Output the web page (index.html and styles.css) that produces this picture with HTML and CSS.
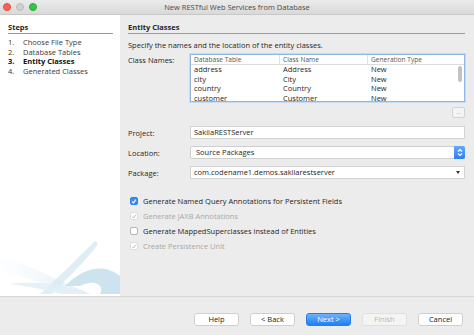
FILE: index.html
```html
<!DOCTYPE html>
<html>
<head>
<meta charset="utf-8">
<link rel="stylesheet" href="styles.css">
</head>
<body>
<div class="window">
  <div class="titlebar">
    <div class="lights">
      <span class="light red"></span>
      <span class="light gray"></span>
      <span class="light green"></span>
    </div>
    <div class="title">New RESTful Web Services from Database</div>
  </div>
  <div class="main">
    <div class="steps">
      <div class="steps-head">Steps</div>
      <ol class="step-list">
        <li><span class="num">1.</span>Choose File Type</li>
        <li><span class="num">2.</span>Database Tables</li>
        <li class="current"><span class="num">3.</span>Entity Classes</li>
        <li><span class="num">4.</span>Generated Classes</li>
      </ol>
      <svg class="swoosh" width="120" height="60" viewBox="0 0 120 60">
        <defs>
          <linearGradient id="g1" x1="0" y1="0" x2="1" y2="0">
            <stop offset="0" stop-color="#eef5fa" stop-opacity="0.2"/>
            <stop offset="1" stop-color="#c6def0"/>
          </linearGradient>
        </defs>
        <path d="M0 20 C30 30 60 45 90 58 L70 58 C45 48 20 40 0 34 Z" fill="url(#g1)" opacity="0.6"/>
        <path d="M95 5 C80 20 60 40 40 58 L52 58 C70 40 88 22 98 8 Z" fill="#d7e8f2" opacity="0.8"/>
        <path d="M65 50 C85 30 105 28 120 40 L120 58 L100 58 C105 50 95 42 80 50 Z" fill="#c2dcec" opacity="0.8"/>
        <path d="M10 48 C40 44 70 50 90 58 L60 58 C40 52 25 50 10 48 Z" fill="#e2eef6" opacity="0.9"/>
      </svg>
    </div>
    <div class="content">
      <div class="content-head">Entity Classes</div>
      <p class="intro">Specify the names and the location of the entity classes.</p>
      <div class="row class-row">
        <div class="label">Class Names:</div>
        <div class="table">
          <div class="thead">
            <div class="c1">Database Table</div>
            <div class="c2">Class Name</div>
            <div class="c3">Generation Type</div>
          </div>
          <div class="tr"><div class="c1">address</div><div class="c2">Address</div><div class="c3">New</div></div>
          <div class="tr"><div class="c1">city</div><div class="c2">City</div><div class="c3">New</div></div>
          <div class="tr"><div class="c1">country</div><div class="c2">Country</div><div class="c3">New</div></div>
          <div class="tr"><div class="c1">customer</div><div class="c2">Customer</div><div class="c3">New</div></div>
          <div class="scrollbar"></div>
        </div>
      </div>
      <div class="more-row"><div class="more">...</div></div>
      <div class="row field-row">
        <div class="label">Project:</div>
        <div class="field">SakilaRESTServer</div>
      </div>
      <div class="row field-row">
        <div class="label">Location:</div>
        <div class="field select">Source Packages
          <span class="stepper">
            <svg width="6" height="9" viewBox="0 0 6 9"><path d="M1 3.5 L3 1.5 L5 3.5 M1 5.5 L3 7.5 L5 5.5" stroke="#fff" stroke-width="1.1" fill="none"/></svg>
          </span>
        </div>
      </div>
      <div class="row field-row">
        <div class="label">Package:</div>
        <div class="field combo">com.codename1.demos.sakilarestserver
          <span class="arrow"></span>
        </div>
      </div>
      <div class="checks">
        <div class="check"><span class="box on"><svg width="7" height="7" viewBox="0 0 7 7"><path d="M1.2 3.6 L2.8 5.2 L5.8 1.4" stroke="#fff" stroke-width="1.3" fill="none"/></svg></span>Generate Named Query Annotations for Persistent Fields</div>
        <div class="check disabled"><span class="box dis"><svg width="7" height="7" viewBox="0 0 7 7"><path d="M1.2 3.6 L2.8 5.2 L5.8 1.4" stroke="#b5b5b5" stroke-width="1.1" fill="none"/></svg></span>Generate JAXB Annotations</div>
        <div class="check"><span class="box"></span>Generate MappedSuperclasses instead of Entities</div>
        <div class="check disabled"><span class="box dis"><svg width="7" height="7" viewBox="0 0 7 7"><path d="M1.2 3.6 L2.8 5.2 L5.8 1.4" stroke="#b5b5b5" stroke-width="1.1" fill="none"/></svg></span>Create Persistence Unit</div>
      </div>
    </div>
  </div>
  <div class="footer">
    <div class="btn">Help</div>
    <div class="btn">&lt; Back</div>
    <div class="btn primary">Next &gt;</div>
    <div class="btn disabled">Finish</div>
    <div class="btn">Cancel</div>
  </div>
</div>
</body>
</html>
```

FILE: styles.css
```css
* { box-sizing: border-box; }
html, body { margin: 0; padding: 0; }
body {
  font-family: "Open Sans", "DejaVu Sans", sans-serif;
  font-size: 7.5px;
  color: #262626;
  background: #ececec;
}
.window {
  width: 474px;
  height: 335px;
  display: flex;
  flex-direction: column;
  background: #ececec;
  overflow: hidden;
}
.titlebar {
  height: 15px;
  background: linear-gradient(#ebebeb, #d9d9d9);
  border-bottom: 1px solid #c8c8c8;
  display: flex;
  align-items: center;
  position: relative;
}
.lights { display: flex; gap: 5px; padding-left: 3px; }
.light { width: 8px; height: 8px; border-radius: 50%; display: block; }
.light.red { background: #fc5f57; border: 0.5px solid #de4a41; }
.light.gray { background: #d0d0d0; border: 0.5px solid #bcbcbc; }
.light.green { background: #33c748; border: 0.5px solid #27aa35; }
.title {
  position: absolute;
  left: 0; right: 0; top: 0; bottom: 0;
  display: flex; align-items: center; justify-content: center;
  color: #4a4a4a;
  font-size: 7.5px;
}
.main {
  display: flex;
  height: 281px;
}
.steps {
  width: 120px;
  background: #fff;
  padding: 7px 7px 0 8px;
  display: flex;
  flex-direction: column;
  position: relative;
}
.steps-head {
  font-weight: bold;
  line-height: 10px;
  padding-bottom: 1px;
  border-bottom: 1px solid #9a9a9a;
}
.step-list {
  list-style: none;
  margin: 4px 0 0 0;
  padding: 0;
  line-height: 9.7px;
  color: #3a3a3a;
}
.step-list .num { display: inline-block; width: 15px; }
.step-list .current { font-weight: bold; color: #111; }
.swoosh { position: absolute; left: 0; bottom: 0; }
.content {
  flex: 1;
  padding: 7px 9px 0 8px;
  display: flex;
  flex-direction: column;
}
.content-head {
  font-weight: bold;
  line-height: 10px;
  padding-bottom: 1px;
  border-bottom: 1px solid #9a9a9a;
}
.intro { margin: 6px 0 4px; line-height: 10px; }
.row { display: flex; }
.label { width: 62px; flex: none; }
.class-row .label { padding-top: 1px; line-height: 10px; }
.table {
  flex: 1;
  height: 48px;
  background: #fff;
  border: 1px solid #8fb8e2;
  box-shadow: 0 0 0 1px #c4dbf2;
  position: relative;
  overflow: hidden;
}
.thead, .tr { display: flex; line-height: 9.6px; }
.thead {
  font-size: 6.6px;
  color: #555;
  border-bottom: 1px solid #dcdcdc;
  height: 10px;
}
.thead > div { border-right: 1px solid #e2e2e2; }
.c1 { width: 89px; padding-left: 3px; }
.c2 { width: 88px; padding-left: 3px; }
.c3 { flex: 1; padding-left: 3px; }
.thead .c3 { border-right: none; }
.scrollbar {
  position: absolute;
  right: 2px;
  top: 11px;
  width: 4px;
  height: 16px;
  border-radius: 2px;
  background: #c2c2c2;
}
.more-row { display: flex; justify-content: flex-end; margin-top: 5px; height: 11px; }
.more {
  width: 13px; height: 11px;
  border: 1px solid #d2d2d2;
  border-radius: 2px;
  background: #f4f4f4;
  color: #aaa;
  font-size: 6px;
  line-height: 8px;
  text-align: center;
}
.field-row { align-items: center; height: 13px; }
.more-row + .field-row { margin-top: 8px; }
.field-row + .field-row { margin-top: 7px; }
.field {
  flex: 1;
  height: 13px;
  background: #fff;
  border: 1px solid #d4d4d4;
  padding-left: 3px;
  line-height: 11px;
  position: relative;
}
.field.select {
  border-radius: 2px;
  padding-left: 5px;
  border-color: #cfcfcf;
}
.stepper {
  position: absolute;
  right: -1px; top: -1px;
  width: 11px; height: 13px;
  background: linear-gradient(#64a8f8, #2f7ff0);
  border-radius: 0 2px 2px 0;
  display: flex; align-items: center; justify-content: center;
}
.field.combo { padding-left: 3px; }
.arrow {
  position: absolute;
  right: 4px; top: 4px;
  width: 0; height: 0;
  border-left: 2.5px solid transparent;
  border-right: 2.5px solid transparent;
  border-top: 3px solid #333;
}
.checks { margin-top: 17px; display: flex; flex-direction: column; gap: 5px; }
.check { display: flex; align-items: center; height: 10px; padding-left: 2px; }
.check.disabled { color: #a8a8a8; }
.box {
  width: 8px; height: 8px;
  border: 1px solid #b5b5b5;
  border-radius: 2px;
  background: #fff;
  margin-right: 5px;
  display: flex; align-items: center; justify-content: center;
  flex: none;
}
.box.on { background: #3a8ef6; border-color: #2d7fe6; }
.box.dis { border-color: #dcdcdc; }
.footer {
  flex: 1;
  border-top: 1px solid #d6d6d6;
  display: flex;
  justify-content: flex-end;
  align-items: flex-start;
  padding: 16px 11px 0 0;
  gap: 11px;
}
.btn {
  width: 45px;
  height: 13px;
  background: #fff;
  border: 1px solid #cfcfcf;
  border-radius: 3px;
  text-align: center;
  line-height: 11px;
  color: #222;
}
.btn.primary {
  background: linear-gradient(#6cb3fa, #1f7ff3);
  border-color: #2a7ce6;
  color: #fff;
}
.btn.disabled { color: #b5b5b5; background: #f4f4f4; border-color: #e0e0e0; }
```
